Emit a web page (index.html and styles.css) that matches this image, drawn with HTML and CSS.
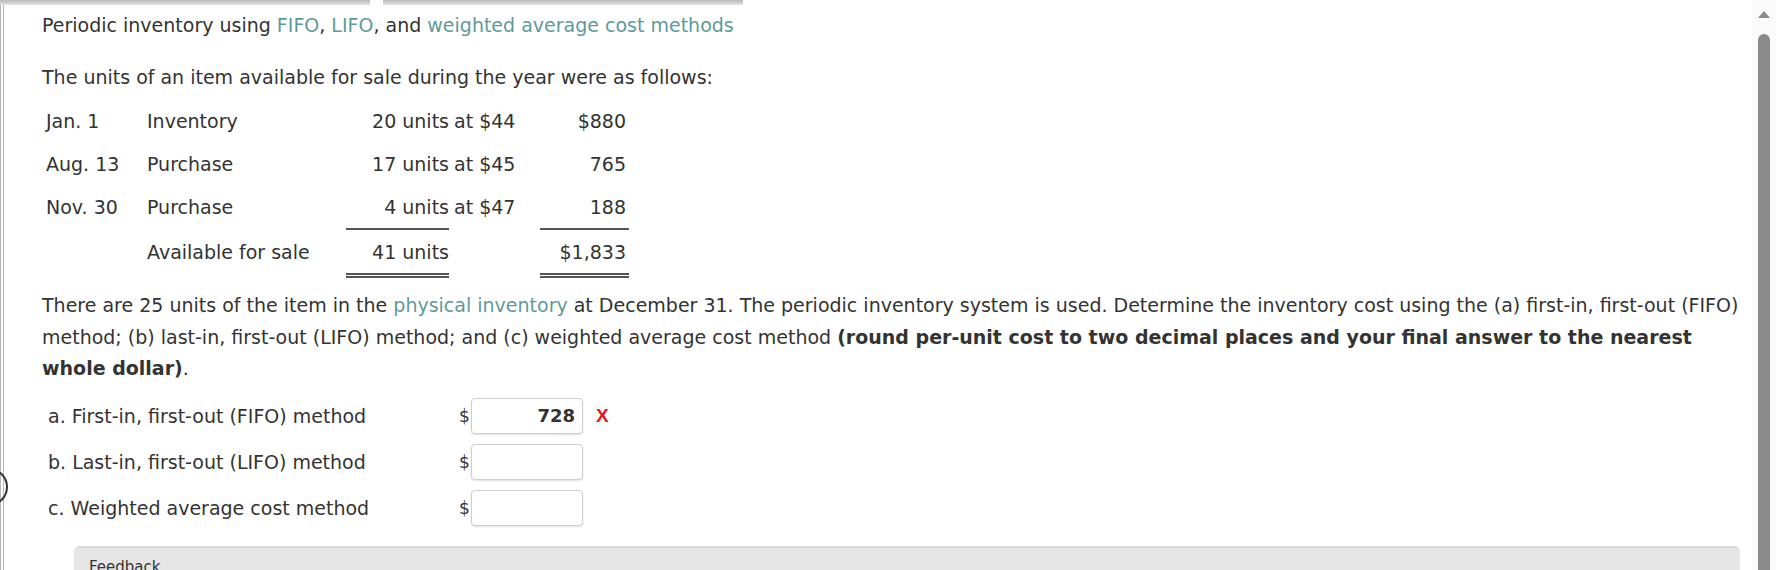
FILE: index.html
```
<!DOCTYPE html>
<html lang="en">
<head>
    <meta charset="UTF-8">
    <meta name="viewport" content="width=device-width, initial-scale=1.0">
    <title>Periodic inventory using FIFO, LIFO, and weighted average cost methods</title>
    <link rel="stylesheet" href="styles.css">
</head>
<body>
    <div class="page">
        <div class="frame">
            <div class="tabs">
                <div class="tab tab-one"></div>
                <div class="tab tab-two"></div>
            </div>
            <span class="side-knob"></span>
            <div class="question">
                <p class="title">Periodic inventory using <a href="#" class="term">FIFO</a>, <a href="#" class="term">LIFO</a>, and <a href="#" class="term">weighted average cost methods</a></p>
                <p class="intro">The units of an item available for sale during the year were as follows:</p>

                <table class="units">
                    <tr>
                        <td class="date">Jan. 1</td>
                        <td class="desc">Inventory</td>
                        <td class="qty">20 units</td>
                        <td class="price">at $44</td>
                        <td class="amount">$880</td>
                    </tr>
                    <tr>
                        <td class="date">Aug. 13</td>
                        <td class="desc">Purchase</td>
                        <td class="qty">17 units</td>
                        <td class="price">at $45</td>
                        <td class="amount">765</td>
                    </tr>
                    <tr class="last-purchase">
                        <td class="date">Nov. 30</td>
                        <td class="desc">Purchase</td>
                        <td class="qty">4 units</td>
                        <td class="price">at $47</td>
                        <td class="amount">188</td>
                    </tr>
                    <tr class="total">
                        <td class="date"></td>
                        <td class="desc">Available for sale</td>
                        <td class="qty">41 units</td>
                        <td class="price"></td>
                        <td class="amount">$1,833</td>
                    </tr>
                </table>

                <p class="task">There are 25 units of the item in the <a href="#" class="term">physical inventory</a> at December 31. The periodic inventory system is used. Determine the inventory cost using the (a) first-in, first-out (FIFO) method; (b) last-in, first-out (LIFO) method; and (c) weighted average cost method <b>(round per-unit cost to two decimal places and your final answer to the nearest whole dollar)</b>.</p>

                <div class="answers">
                    <div class="answer">
                        <span class="answer-label">a. First-in, first-out (FIFO) method</span>
                        <span class="dollar">$</span>
                        <input class="answer-box" type="text" value="728">
                        <span class="wrong">X</span>
                    </div>
                    <div class="answer">
                        <span class="answer-label">b. Last-in, first-out (LIFO) method</span>
                        <span class="dollar">$</span>
                        <input class="answer-box" type="text" value="">
                    </div>
                    <div class="answer">
                        <span class="answer-label">c. Weighted average cost method</span>
                        <span class="dollar">$</span>
                        <input class="answer-box" type="text" value="">
                    </div>
                </div>

                <div class="feedback">
                    <div class="feedback-title">Feedback</div>
                </div>
            </div>
        </div>
        <div class="scrollbar">
            <div class="scroll-up"></div>
            <div class="scroll-thumb"></div>
        </div>
    </div>
</body>
</html>
```
FILE: styles.css
```
html, body {
    margin: 0;
    height: 100%;
    overflow: hidden;
}

body {
    font-family: "DejaVu Sans", Verdana, sans-serif;
    font-size: 19px;
    color: #333;
    background-color: white;
}

.page {
    display: flex;
    height: 100%;
}

.frame {
    position: relative;
    flex: 1;
    border-left: 4px double #b5b5b5;
}

.tabs {
    display: flex;
    gap: 13px;
    height: 5px;
    margin-left: -4px;
}
.tab {
    height: 5px;
    background: linear-gradient(#b9b9b9, #e4e4e4);
}
.tab-one {
    width: 370px;
}
.tab-two {
    width: 360px;
}

.side-knob {
    position: absolute;
    left: -34px;
    top: 468px;
    width: 34px;
    height: 34px;
    border: 2px solid #333;
    border-radius: 50%;
}

.question {
    padding: 0 4px 0 38px;
}

p {
    margin: 0;
}
.title {
    margin-top: 8px;
    line-height: 24px;
}
.intro {
    margin-top: 28px;
    line-height: 24px;
}

.term {
    color: #5e9a9a;
    text-decoration: none;
}

.units {
    border-collapse: collapse;
    margin: 10px 0 0 -2px;
}
.units td {
    height: 43px;
    padding: 0;
    vertical-align: middle;
    white-space: nowrap;
}
.date {
    width: 101px;
    padding-left: 6px !important;
}
.desc {
    width: 199px;
}
.qty {
    width: 103px;
    text-align: right;
}
.price {
    width: 86px;
    padding-left: 5px !important;
}
.amount {
    width: 86px;
    text-align: right;
    padding-right: 3px !important;
}
.last-purchase .qty, .last-purchase .amount {
    border-bottom: 2px solid #555;
}
.total .qty, .total .amount {
    border-bottom: 5px double #555;
}

.task {
    margin-top: 12px;
    line-height: 31.5px;
}

.answers {
    margin-top: 8px;
}
.answer {
    display: flex;
    align-items: center;
    height: 46px;
}
.answer-label {
    width: 411px;
    padding-left: 6px;
}
.dollar {
    width: 12px;
    font-size: 17px;
}
.answer-box {
    box-sizing: border-box;
    width: 112px;
    height: 36px;
    border: 1px solid #cfcfcf;
    border-radius: 4px;
    box-shadow: 0 1px 2px rgba(0, 0, 0, 0.12);
    padding: 0 7px;
    font-family: "DejaVu Sans", Verdana, sans-serif;
    font-size: 18px;
    font-weight: bold;
    color: #333;
    text-align: right;
    background-color: white;
}
.wrong {
    margin-left: 13px;
    color: #e8141b;
    font-family: "Liberation Sans", Arial, sans-serif;
    font-weight: bold;
    font-size: 19px;
}

.feedback {
    margin: 15px 8px 0 32px;
    height: 60px;
    background-color: #e6e6e6;
    border-top: 2px solid #dadada;
    border-radius: 6px 6px 0 0;
}
.feedback-title {
    padding: 10px 0 0 15px;
    font-size: 15px;
    color: #333;
}

.scrollbar {
    width: 24px;
    display: flex;
    flex-direction: column;
    align-items: center;
    background-color: #fafafa;
}
.scroll-up {
    margin-top: 11px;
    width: 0;
    height: 0;
    border-left: 6px solid transparent;
    border-right: 6px solid transparent;
    border-bottom: 7px solid #8a8a8a;
}
.scroll-thumb {
    margin-top: 16px;
    width: 12px;
    flex: 1;
    background-color: #8a8a8a;
    border-radius: 6px 6px 0 0;
}
```
